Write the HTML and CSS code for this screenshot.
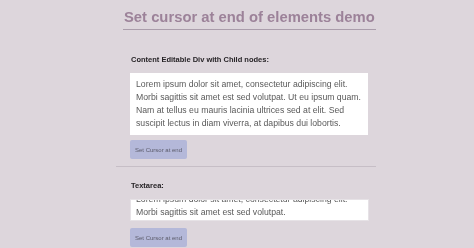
FILE: index.html
```html
<!DOCTYPE html>
<html lang="en">
<head>
<meta charset="utf-8">
<title>Set cursor at end of elements demo</title>
<link rel="stylesheet" href="styles.css">
</head>
<body>
<div class="page">
  <h1 class="title">Set cursor at end of elements demo</h1>
  <section class="demo">
    <p class="label">Content Editable Div with Child nodes:</p>
    <div class="editable" contenteditable="true"><span>Lorem ipsum dolor sit amet, consectetur adipiscing elit.</span> <span>Morbi sagittis sit amet est sed volutpat. Ut eu ipsum quam.</span> <span>Nam at tellus eu mauris lacinia ultrices sed at elit. Sed</span> <span>suscipit lectus in diam viverra, at dapibus dui lobortis.</span></div>
    <button class="btn" type="button">Set Cursor at end</button>
  </section>
  <hr class="divider">
  <section class="demo">
    <p class="label">Textarea:</p>
    <textarea class="area" id="area">Lorem ipsum dolor sit amet, consectetur adipiscing elit. Morbi sagittis sit amet est sed volutpat.</textarea>
    <button class="btn btn-low" type="button">Set Cursor at end</button>
  </section>
</div>
<script src="script.js"></script>
</body>
</html>
```

FILE: styles.css
```css
html, body {
  margin: 0;
  padding: 0;
  background: #ddd6dc;
  font-family: "Liberation Sans", Arial, sans-serif;
}

.page {
  margin-left: 123px;
  width: 253px;
}

.title {
  margin: 0 0 25px;
  padding: 9px 0 3px 1px;
  font-size: 14.8px;
  line-height: 17px;
  font-weight: bold;
  color: #9c8299;
  border-bottom: 1.5px solid #aa9dab;
  white-space: nowrap;
}

.demo {
  padding-left: 7px;
}

.label {
  margin: 0 0 9px 1px;
  font-size: 7.5px;
  line-height: 9px;
  font-weight: bold;
  color: #262326;
}

.editable {
  box-sizing: border-box;
  width: 238px;
  padding: 5px 4px 5px 6px;
  background: #ffffff;
  color: #5a5a5a;
  font-size: 8.7px;
  line-height: 13px;
  outline: none;
}

.btn {
  display: block;
  margin-top: 5px;
  height: 19px;
  padding: 0 5px;
  border: none;
  border-radius: 2px;
  background: #b4b8d9;
  color: #5b5b6a;
  font-family: "Liberation Sans", Arial, sans-serif;
  font-size: 6px;
}

.btn-low {
  margin-top: 7px;
}

.divider {
  margin: 7px 0 14px -7px;
  border: none;
  border-top: 1px solid #c6bec6;
  height: 0;
}

.area {
  display: block;
  box-sizing: border-box;
  width: 239px;
  height: 22px;
  margin: 1px 0 0;
  padding: 2px 2px 2px 5px;
  border: 1px solid #e6e2e6;
  background: #ffffff;
  color: #5a5a5a;
  font-family: "Liberation Sans", Arial, sans-serif;
  font-size: 8.7px;
  line-height: 12.5px;
  resize: vertical;
  overflow-y: scroll;
}

.area::-webkit-scrollbar {
  width: 7px;
}

.area::-webkit-scrollbar-track {
  background: #ffffff;
}

.area::-webkit-scrollbar-thumb {
  background: #cfcfcf;
  border-radius: 2px;
}

.area::-webkit-resizer {
  background: #ffffff;
}
```

FILE: script.js
```js
var area = document.getElementById('area');
area.scrollTop = area.scrollHeight;
```
